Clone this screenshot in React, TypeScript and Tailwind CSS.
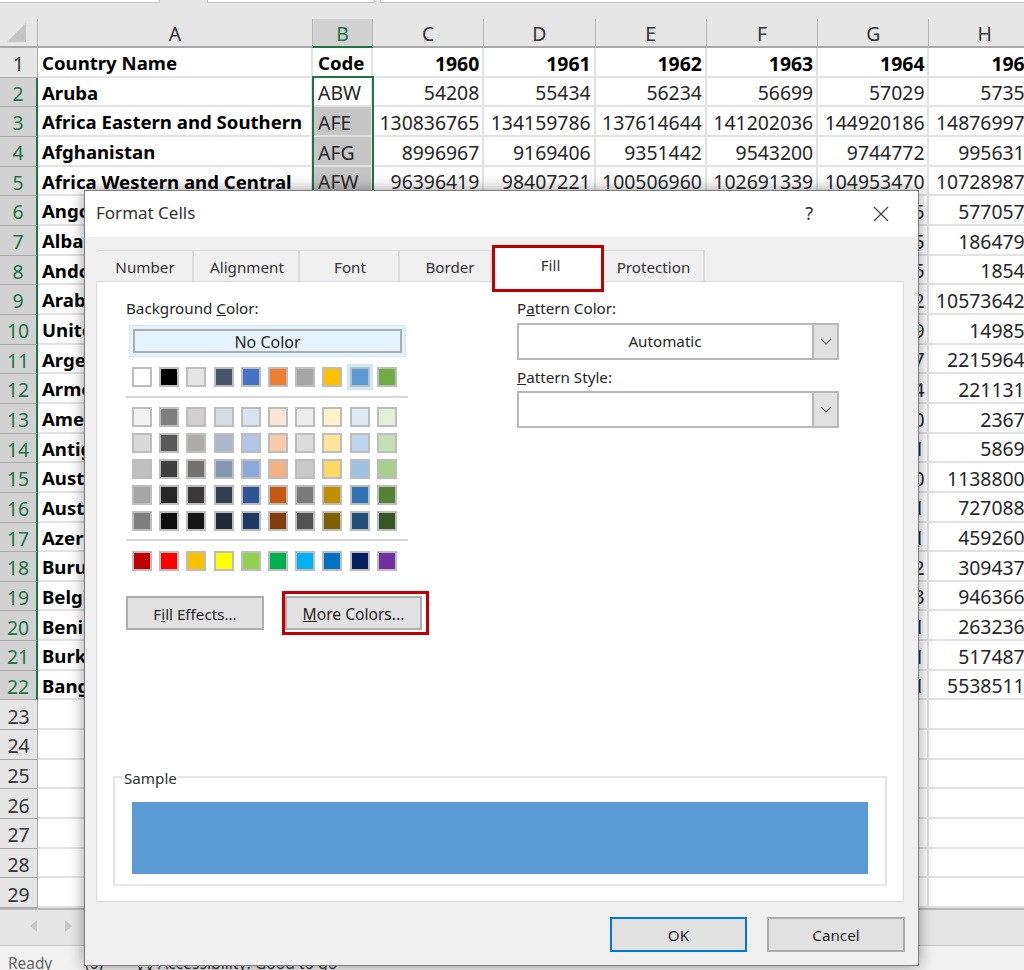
import React from "react";

const names = ["Aruba","Africa Eastern and Southern","Afghanistan","Africa Western and Central","Angola","Albania","Andorra","Arab World","United Arab Emirates","Argentina","Armenia","American Samoa","Antigua and Barbuda","Australia","Austria","Azerbaijan","Burundi","Belgium","Benin","Burkina Faso","Bangladesh"];
const codes = ["ABW","AFE","AFG","AFW","AGO","ALB","AND","ARB","ARE","ARG","ARM","ASM","ATG","AUS","AUT","AZE","BDI","BEL","BEN","BFA","BGD"];
const full: string[][] = [
  ["54208","55434","56234","56699","57029","57350"],
  ["130836765","134159786","137614644","141202036","144920186","148769970"],
  ["8996967","9169406","9351442","9543200","9744772","9956310"],
  ["96396419","98407221","100506960","102691339","104953470","107289870"],
];
const gTail = "55529740101123111";
const hRest = ["5770570","1864790","18540","105736420","149850","22159640","2211310","23670","58690","11388000","7270880","4592600","3094370","9463660","2632360","5174870","55385110"];

const top = ["bg-[#ffffff]","bg-[#000000]","bg-[#e7e6e6]","bg-[#44546a]","bg-[#4472c4]","bg-[#ed7d31]","bg-[#a5a5a5]","bg-[#ffc000]","bg-[#5b9bd5]","bg-[#70ad47]"];
const shades = [
  ["bg-[#f2f2f2]","bg-[#7f7f7f]","bg-[#d0cece]","bg-[#d6dce4]","bg-[#d9e2f3]","bg-[#fbe5d5]","bg-[#ededed]","bg-[#fff2cc]","bg-[#deeaf6]","bg-[#e2efd9]"],
  ["bg-[#d9d9d9]","bg-[#595959]","bg-[#aeabab]","bg-[#adb9ca]","bg-[#b4c6e7]","bg-[#f7cbac]","bg-[#dbdbdb]","bg-[#fee599]","bg-[#bdd6ee]","bg-[#c5e0b3]"],
  ["bg-[#bfbfbf]","bg-[#3f3f3f]","bg-[#767171]","bg-[#8496b0]","bg-[#8eaadb]","bg-[#f4b183]","bg-[#c9c9c9]","bg-[#ffd965]","bg-[#9cc3e5]","bg-[#a8d08d]"],
  ["bg-[#a6a6a6]","bg-[#262626]","bg-[#3a3838]","bg-[#323f4f]","bg-[#2f5496]","bg-[#c45911]","bg-[#7b7b7b]","bg-[#bf8f00]","bg-[#2e74b5]","bg-[#538135]"],
  ["bg-[#7f7f7f]","bg-[#0d0d0d]","bg-[#171616]","bg-[#222a35]","bg-[#1f3864]","bg-[#833c0b]","bg-[#525252]","bg-[#7f6000]","bg-[#1f4e79]","bg-[#375623]"],
];
const standard = ["bg-[#c00000]","bg-[#ff0000]","bg-[#ffc000]","bg-[#ffff00]","bg-[#92d050]","bg-[#00b050]","bg-[#00b0f0]","bg-[#0070c0]","bg-[#002060]","bg-[#7030a0]"];

const cellBase = "border-r-2 border-b-2 border-[#e2e2e2] bg-white whitespace-nowrap overflow-hidden flex items-center pt-[3px]";

function ColHead({ label, active }: { label: string; active?: boolean }) {
  return (
    <div className={active
      ? "h-full pt-[3px] flex items-center justify-center bg-[#d2d2d2] text-[#217346] border-b-2 border-[#217346] border-r border-r-[#b5b5b5]"
      : "h-full pt-[3px] flex items-center justify-center bg-[#e6e6e6] text-[#333333] border-b-2 border-[#a8a8a8] border-r border-r-[#b5b5b5]"}>
      {label}
    </div>
  );
}

function RowHead({ n }: { n: number }) {
  const sel = n >= 2 && n <= 22;
  return (
    <div className={sel
      ? "pt-[3px] flex items-center justify-center bg-[#d2d2d2] text-[#217346] border-b border-[#a8a8a8] border-r-2 border-r-[#217346]"
      : "pt-[3px] flex items-center justify-center bg-[#e6e6e6] text-[#333333] border-b border-[#a8a8a8] border-r border-r-[#a8a8a8]"}>
      {n}
    </div>
  );
}

function Sheet() {
  const rows = [];
  for (let n = 1; n <= 29; n++) {
    const i = n - 2;
    const key = "r" + n;
    rows.push(<RowHead key={key + "h"} n={n} />);
    rows.push(
      <div key={key + "a"} className={cellBase + " pl-1 font-bold text-black text-[18.6px]"}>
        {n === 1 ? "Country Name" : names[i] ?? ""}
      </div>
    );
    rows.push(
      <div key={key + "b"} className={
        n === 1 ? cellBase + " pl-[5px] font-bold text-black text-[18.6px]"
        : n === 2 ? cellBase + " pl-[5px] text-[#262626]"
        : n <= 22 ? "border-r-2 border-b-2 border-[#e2e2e2] bg-[#c6c6c6] whitespace-nowrap overflow-hidden flex items-center pt-[3px] pl-[5px] text-[#262626]"
        : cellBase
      }>
        {n === 1 ? "Code" : codes[i] ?? ""}
      </div>
    );
    for (let c = 0; c < 6; c++) {
      let v = "";
      if (n === 1) v = String(1960 + c);
      else if (n >= 2 && n <= 5) v = full[i][c];
      else if (n >= 6 && n <= 22) {
        if (c === 4) v = gTail[n - 6];
        if (c === 5) v = hRest[n - 6];
      }
      rows.push(
        <div key={key + "c" + c} className={cellBase + " justify-end pr-[3px] " + (n === 1 ? "font-bold text-black" : "text-[#262626]")}>
          {v}
        </div>
      );
    }
  }
  return (
    <div className="relative grid grid-cols-[38px_275px_60px_repeat(6,111.3px)] grid-rows-[29px_repeat(29,29.66px)] text-[19.4px] leading-none">
      <div className="bg-[#e6e6e6] border-b-2 border-[#a8a8a8] border-r border-r-[#b5b5b5] flex items-center justify-center">
        <svg width="19" height="19" viewBox="0 0 19 19" className="-translate-x-[2px]"><polygon points="19,0 19,19 0,19" fill="#c4c4c4" /></svg>
      </div>
      {["A","B","C","D","E","F","G","H"].map((h) => <ColHead key={h} label={h} active={h === "B"} />)}
      {rows}
      <div className="absolute left-[312px] top-[57px] w-[62px] h-[625px] border-2 border-[#217346] pointer-events-none" />
    </div>
  );
}

function Swatch({ c, selected }: { c: string; selected?: boolean }) {
  return <div className={"w-5 h-5 shrink-0 border-2 border-[#bdbdbd] " + c + (selected ? " ring-[3px] ring-[#cce8ff]" : "")} />;
}

function Row({ colors, sel }: { colors: string[]; sel?: number }) {
  return (
    <div className="flex gap-[7.2px] pl-[6px]">
      {colors.map((c, i) => <Swatch key={i} c={c} selected={i === sel} />)}
    </div>
  );
}

function Combo({ value }: { value?: string }) {
  return (
    <div className="flex w-[322px] h-[37px] border-2 border-[#b8b8b8] bg-white">
      <div className="flex-1 flex items-center justify-center pr-[1px]">{value}</div>
      <div className="w-[25px] bg-[#e1e1e1] border-l-2 border-[#b8b8b8] flex items-center justify-center">
        <svg width="12" height="7" viewBox="0 0 12 7" fill="none" stroke="#606060" strokeWidth="1.1"><path d="M1 1l5 5 5-5" /></svg>
      </div>
    </div>
  );
}

const tabClass = "h-[31px] pt-[3px] flex items-center justify-center bg-[#f0f0f0] border-t border-r-2 border-[#dcdcdc] text-[#333333]";
const btnClass = "h-[34px] pt-[3px] bg-[#e1e1e1] border-2 border-[#adadad] flex items-center justify-center";

function Dialog() {
  return (
    <div className="absolute left-[84px] top-[190px] w-[835px] h-[776px] flex flex-col bg-[#f0f0f0] border border-[#7d7d7d] shadow-[0_0_14px_rgba(0,0,0,0.4)] text-[15.2px] leading-none text-[#262626]">
      <div className="h-[46px] shrink-0 bg-white flex items-center pl-[11px] text-[#333333] text-[17px]">
        <span className="flex-1 -translate-y-[2px]">Format Cells</span>
        <span className="text-[18px] mr-[60px] -translate-y-px">?</span>
        <svg width="16" height="16" viewBox="0 0 16 16" fill="none" stroke="#444444" strokeWidth="1.2" className="mr-[29px]"><path d="M1 1l14 14M15 1L1 15" /></svg>
      </div>
      <div className="flex items-start h-[31px] mt-[13px] ml-[13px] shrink-0 relative">
        <div className={tabClass + " w-[96px]"}>Number</div>
        <div className={tabClass + " w-[106px] pl-[2px]"}>Alignment</div>
        <div className={tabClass + " w-[100px] pl-[2px]"}>Font</div>
        <div className={tabClass + " w-[92px] pl-[10px]"}>Border</div>
        <div className="w-[112px] h-[47px] -mt-[5px] z-10 flex items-center justify-center pb-[5px] pl-[5px] bg-white border-3 border-[#c00000] text-[#333333]">Fill</div>
        <div className={tabClass + " w-[101px]"}>Protection</div>
      </div>
      <div className="ml-[11px] w-[808px] h-[621px] shrink-0 bg-white border border-[#d9d9d9] flex flex-col">
        <div className="flex flex-1 pl-[29px] pt-[17px]">
          <div className="w-[391px] shrink-0">
            <div className="h-[24px] pb-[4px] flex items-center"><span>Background <u>C</u>olor:</span></div>
            <div className="w-[277px] h-[32px] mt-[2px] ml-[3px] p-[3px] border border-[#cce8ff] bg-[#e5f3ff]">
              <div className="h-full pt-[2px] border-2 border-[#adadad] flex items-center justify-center text-[16px]">No Color</div>
            </div>
            <div className="mt-[10px]"><Row colors={top} sel={8} /></div>
            <div className="h-[2px] w-[282px] bg-[#d6d6d6] mt-[9px]" />
            <div className="mt-[9px] flex flex-col gap-[6px]">
              {shades.map((s, i) => <Row key={i} colors={s} />)}
            </div>
            <div className="h-[2px] w-[282px] bg-[#d6d6d6] mt-[8px]" />
            <div className="mt-[10px]"><Row colors={standard} /></div>
            <div className="flex items-center gap-[18px] mt-[20px]">
              <div className={btnClass + " w-[138px]"}><span>F<u>i</u>ll Effects...</span></div>
              <div className="border-3 border-[#c00000] pt-[2px] pb-[2px] pr-[4px]">
                <div className={btnClass + " w-[137px] text-[15.6px]"}><span><u>M</u>ore Colors...</span></div>
              </div>
            </div>
          </div>
          <div>
            <div className="h-[24px] pb-[4px] flex items-center"><span>P<u>a</u>ttern Color:</span></div>
            <Combo value="Automatic" />
            <div className="h-[24px] mt-[6px] flex items-center"><span><u>P</u>attern Style:</span></div>
            <div className="mt-[1px]"><Combo /></div>
          </div>
        </div>
        <div className="relative ml-[16px] w-[774px] mb-[15px] h-[110px] border-2 border-[#e6e6e6] pt-[24px] pb-[10px] px-[17px]">
          <span className="absolute left-[8px] -top-[7px] bg-white px-[1px] text-[#333333]">Sample</span>
          <div className="h-full bg-[#5b9bd5]" />
        </div>
      </div>
      <div className="flex justify-end gap-[20px] pr-[13px] mt-[15px]">
        <div className="w-[137px] h-[35px] pt-[3px] bg-[#e1e1e1] border-2 border-[#0078d7] flex items-center justify-center">OK</div>
        <div className="w-[138px] h-[35px] pt-[3px] bg-[#e1e1e1] border-2 border-[#adadad] flex items-center justify-center">Cancel</div>
      </div>
    </div>
  );
}

export default function App() {
  return (
    <div className="relative w-[1024px] h-[970px] overflow-hidden bg-[#e6e6e6] font-['Noto_Sans',sans-serif] flex flex-col">
      <div className="h-[19px] shrink-0 flex items-start">
        <div className="w-[160px] h-[3px] bg-white border-b border-r border-[#c6c6c6]" />
        <div className="w-[168px] h-[3px] ml-[47px] bg-white border-b border-x border-[#c6c6c6]" />
        <div className="flex-1 h-[3px] ml-[5px] bg-white border-b border-l border-[#c6c6c6]" />
      </div>
      <Sheet />
      <div className="h-[37px] shrink-0 flex items-center pl-[29px] pb-[4px] gap-[26px] border-t-2 border-[#b8b8b8]">
        <svg width="9" height="14" viewBox="0 0 9 14"><polygon points="8,1 1,7 8,13" fill="#c8c8c8" /></svg>
        <svg width="9" height="14" viewBox="0 0 9 14"><polygon points="1,1 8,7 1,13" fill="#c8c8c8" /></svg>
      </div>
      <div className="flex-1 bg-[#f1f1f1] border-t border-[#c6c6c6] flex items-center pl-2 pt-[6px] text-[15.4px] text-[#666666] whitespace-nowrap">
        <span className="w-[77px]">Ready</span>
        <span className="text-[#333333] w-[50px]">(6)</span>
        <svg width="20" height="20" viewBox="0 0 20 20" fill="none" stroke="#333333" strokeWidth="1.2" className="mr-[3px]"><circle cx="10" cy="10" r="7" /><path d="M2 18l5-5M18 18l-5-5" /></svg>
        <span className="text-[#333333] text-[15.7px]">Accessibility: Good to go</span>
      </div>
      <Dialog />
    </div>
  );
}
